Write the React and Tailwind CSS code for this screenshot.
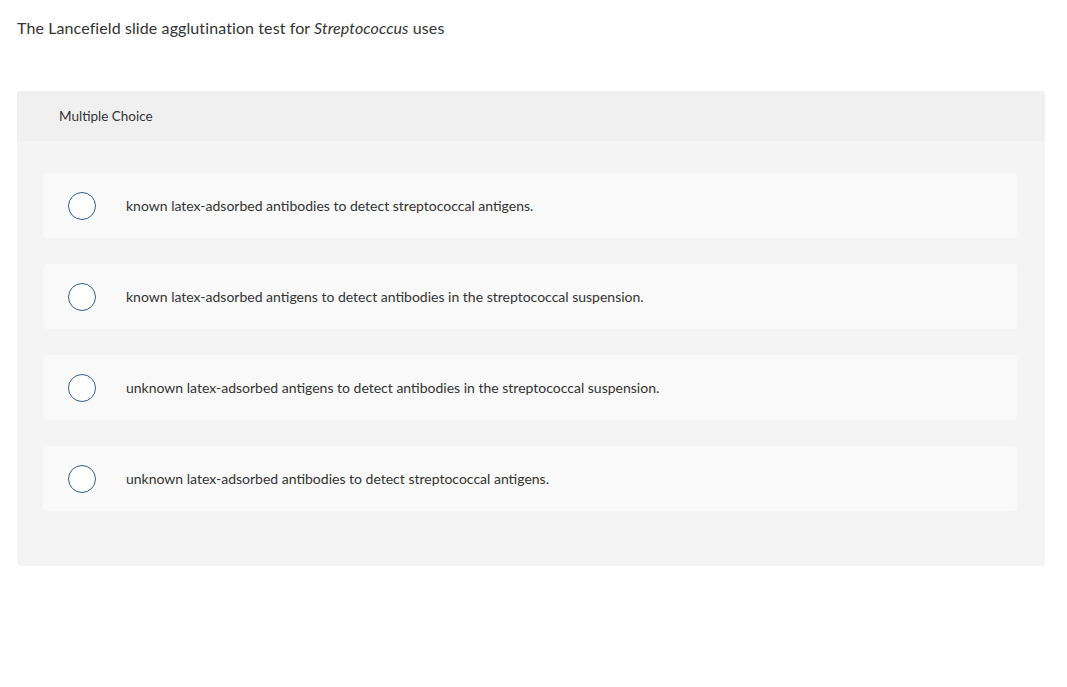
const choices = [
    "known latex-adsorbed antibodies to detect streptococcal antigens.",
    "known latex-adsorbed antigens to detect antibodies in the streptococcal suspension.",
    "unknown latex-adsorbed antigens to detect antibodies in the streptococcal suspension.",
    "unknown latex-adsorbed antibodies to detect streptococcal antigens.",
];

function ChoiceRow({ text }) {
    return (
        <label className="flex items-center h-[65px] bg-[#f9f9f9] rounded-[4px] cursor-pointer">
            {/* radio ring */}
            <span className="ml-[25px] mt-[1px] w-[28px] h-[28px] rounded-full border-[1.5px] border-[#2f5f8f] bg-white shrink-0"></span>
            <span className="ml-[30px] text-[14px] text-[#333]">{text}</span>
        </label>
    );
}

export default function App() {
    return (
        <div
            className="min-h-screen bg-white pl-[17px] pr-[22px] pt-[17px]"
            style={{ fontFamily: "Lato, 'Open Sans', sans-serif" }}
        >
            <p className="text-[16px] tracking-[0.1px] text-[#333] leading-[22px]">
                The Lancefield slide agglutination test for <i>Streptococcus</i> uses
            </p>

            <div className="mt-[52px] rounded-[4px] overflow-hidden bg-[#f4f4f4]">
                <div className="h-[50px] bg-[#f0f0f0] flex items-center pl-[42px] pt-[1px] text-[13.5px] text-[#333]">
                    Multiple Choice
                </div>
                <div className="pl-[26px] pr-[28px] pt-[32px] pb-[55px] flex flex-col gap-[26px]">
                    {choices.map((c) => (
                        <ChoiceRow key={c} text={c} />
                    ))}
                </div>
            </div>
        </div>
    );
}
